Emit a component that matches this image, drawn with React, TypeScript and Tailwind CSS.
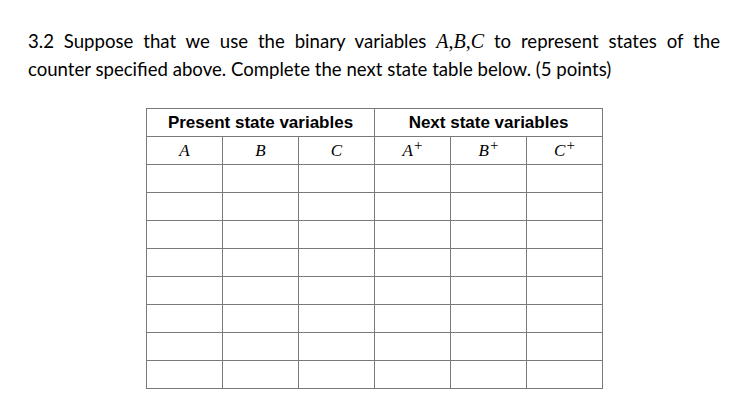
const cols = 6;
const rows = 8;

function Var({ name, plus }: { name: string; plus?: boolean }) {
  return (
    <span className="italic font-['Liberation_Serif',serif] text-[17px]">
      {name}
      {plus && <span className="not-italic text-[15px] relative -top-[6px] ml-[1px]">+</span>}
    </span>
  );
}

export default function App() {
  return (
    <div className="w-[751px] h-[412px] bg-white text-black overflow-hidden">
      <div className="pl-[28px] pt-[27px] w-[720px] font-['Lato',sans-serif] text-[18.6px] leading-[28px]">
        <div className="text-justify [text-align-last:justify]">
          3.2 Suppose that we use the binary variables{" "}
          <span className="italic font-['Liberation_Serif',serif] text-[20px]">A,B,C</span> to represent states of the
        </div>
        <div>counter specified above. Complete the next state table below. (5 points)</div>
      </div>

      <table className="ml-[146px] mt-[25px] border-collapse table-fixed">
        <colgroup>
          {Array.from({ length: cols }).map((_, i) => (
            <col key={i} className="w-[76px]" />
          ))}
        </colgroup>
        <thead>
          <tr className="h-[28px]">
            <th colSpan={3} className="border border-[#7a7a7a] font-['Liberation_Sans',sans-serif] font-bold text-[17px] p-0">
              Present state variables
            </th>
            <th colSpan={3} className="border border-[#7a7a7a] font-['Liberation_Sans',sans-serif] font-bold text-[17px] p-0">
              Next state variables
            </th>
          </tr>
          <tr className="h-[28px]">
            <th className="border border-[#7a7a7a] font-normal p-0"><Var name="A" /></th>
            <th className="border border-[#7a7a7a] font-normal p-0"><Var name="B" /></th>
            <th className="border border-[#7a7a7a] font-normal p-0"><Var name="C" /></th>
            <th className="border border-[#7a7a7a] font-normal p-0"><Var name="A" plus /></th>
            <th className="border border-[#7a7a7a] font-normal p-0"><Var name="B" plus /></th>
            <th className="border border-[#7a7a7a] font-normal p-0"><Var name="C" plus /></th>
          </tr>
        </thead>
        <tbody>
          {Array.from({ length: rows }).map((_, r) => (
            <tr key={r} className="h-[28px]">
              {Array.from({ length: cols }).map((_, c) => (
                <td key={c} className="border border-[#7a7a7a] p-0" />
              ))}
            </tr>
          ))}
        </tbody>
      </table>
    </div>
  );
}
